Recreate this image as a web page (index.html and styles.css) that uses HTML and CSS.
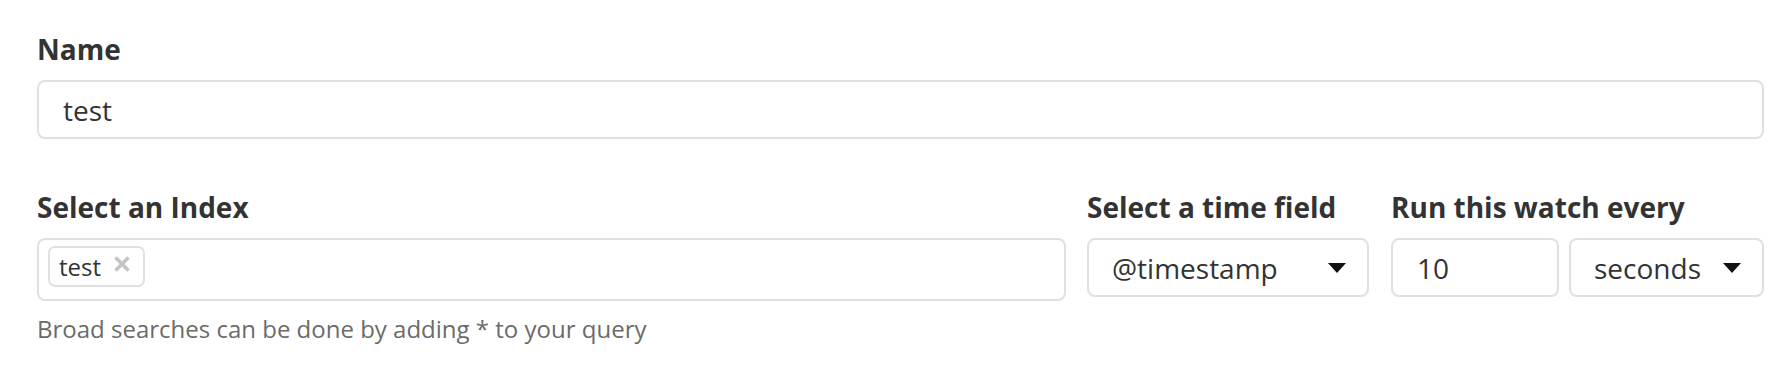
FILE: index.html
```html
<!DOCTYPE html>
<html>
<head>
<meta charset="utf-8">
<link rel="stylesheet" href="styles.css">
</head>
<body>
<div class="form">
  <div class="row-name">
    <label class="label">Name</label>
    <div class="field field-wide"><span class="value">test</span></div>
  </div>
  <div class="row-second">
    <div class="col col-index">
      <label class="label">Select an Index</label>
      <div class="field field-multi">
        <span class="tag"><span class="tag-text">test</span><svg class="tag-x" viewBox="0 0 18 18" width="18" height="18"><path d="M2.5 2.5 L15.5 15.5 M15.5 2.5 L2.5 15.5" stroke="#c4c4c4" stroke-width="3.6" stroke-linecap="butt" fill="none"/></svg></span>
      </div>
      <div class="help">Broad searches can be done by adding * to your query</div>
    </div>
    <div class="col col-time">
      <label class="label">Select a time field</label>
      <div class="field field-select"><span class="value">@timestamp</span><span class="caret"></span></div>
    </div>
    <div class="col col-run">
      <label class="label">Run this watch every</label>
      <div class="run-inputs">
        <div class="field field-number"><span class="value">10</span></div>
        <div class="field field-select field-unit"><span class="value">seconds</span><span class="caret"></span></div>
      </div>
    </div>
  </div>
</div>
</body>
</html>
```

FILE: styles.css
```css
html, body {
  margin: 0;
  padding: 0;
  background: #ffffff;
}
body {
  font-family: "Open Sans", "Noto Sans", sans-serif;
  color: #333333;
  width: 1792px;
  height: 386px;
  overflow: hidden;
}
.form {
  padding: 30px 28px 0 37px;
}
.label {
  display: block;
  font-size: 28px;
  font-weight: 700;
  line-height: 38px;
  color: #333333;
  margin-bottom: 12px;
  white-space: nowrap;
}
.field {
  box-sizing: border-box;
  border: 2px solid #e0e0e0;
  border-radius: 8px;
  background: #ffffff;
  height: 59px;
  display: flex;
  align-items: center;
  font-size: 28px;
  color: #333333;
}
.value {
  line-height: 38px;
  white-space: nowrap;
}
.field-wide {
  padding-left: 24px;
}
.row-second {
  display: flex;
  margin-top: 49px;
}
.col-index {
  width: 1029px;
  margin-right: 21px;
}
.col-time {
  width: 282px;
  margin-right: 22px;
}
.col-run {
  width: 373px;
}
.field-multi {
  height: 63px;
  align-items: flex-start;
  padding: 6px 9px 0 9px;
}
.tag {
  box-sizing: border-box;
  height: 41px;
  border: 2px solid #e0e0e0;
  border-radius: 7px;
  display: flex;
  align-items: center;
  padding: 0 12px 0 9px;
  font-size: 24px;
}
.tag-text {
  line-height: 32px;
  color: #333333;
}
.tag-x {
  display: block;
  margin-left: 12px;
  margin-top: -6px;
}
.help {
  font-size: 24px;
  line-height: 34px;
  color: #6b6b6b;
  margin-top: 11px;
  white-space: nowrap;
}
.field-select {
  justify-content: space-between;
  padding: 0 21px 0 23px;
}
.caret {
  width: 0;
  height: 0;
  border-left: 9px solid transparent;
  border-right: 9px solid transparent;
  border-top: 10px solid #111111;
}
.run-inputs {
  display: flex;
  gap: 10px;
}
.field-number {
  width: 168px;
  padding-left: 24px;
}
.field-unit {
  width: 195px;
  padding: 0 21px 0 23px;
}
```
